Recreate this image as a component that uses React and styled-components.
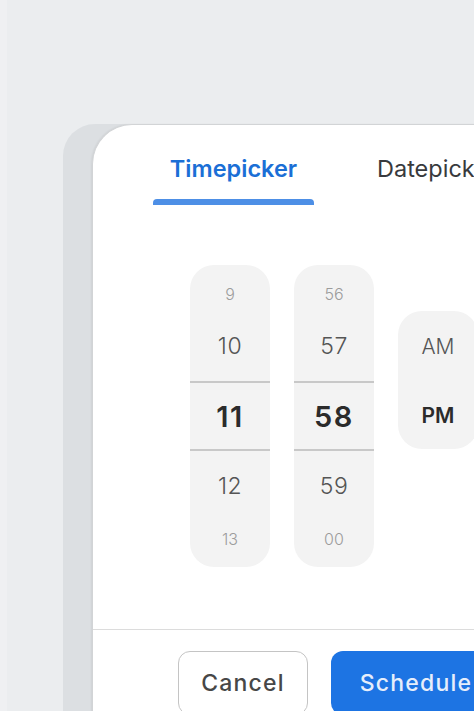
import React from "react";
import styled, { createGlobalStyle } from "styled-components";

const Global = createGlobalStyle`
  html, body { margin: 0; padding: 0; overflow: hidden; }
  body { font-family: Inter, "Noto Sans", "Liberation Sans", sans-serif; background: #ebedef; }
`;

const Page = styled.div`
  width: 474px;
  height: 711px;
  overflow: hidden;
  background: #ebedef;
  border-left: 7px solid #eff0f2;
  box-sizing: border-box;
  padding: 152px 0 0 56px;
`;

const BackCard = styled.div`
  width: 560px;
  height: 640px;
  background: #dcdfe2;
  border-top-left-radius: 32px;
  padding-left: 29px;
  box-sizing: border-box;
`;

const Card = styled.div`
  margin-top: -28px;
  width: 520px;
  height: 640px;
  background: #fff;
  border: 1px solid #d2d4d6;
  border-right: none;
  border-bottom: none;
  border-top-left-radius: 40px;
  box-shadow: -1px 0 2px rgba(0, 0, 0, 0.06);
  box-sizing: border-box;
  display: flex;
  flex-direction: column;
`;

const Tabs = styled.div`
  display: flex;
  padding: 26px 0 0 60px;
  gap: 0;
`;

const Tab = styled.div`
  display: flex;
  flex-direction: column;
  align-items: ${(p) => (p.$active ? "center" : "flex-start")};
  width: ${(p) => (p.$w ? p.$w + "px" : "auto")};
  margin-left: ${(p) => p.$ml || 0}px;
  font-size: 23.5px;
  font-weight: ${(p) => (p.$active ? 600 : 400)};
  color: ${(p) => (p.$active ? "#1b6fd6" : "#383a3d")};
  line-height: 36px;
  white-space: nowrap;
`;

const Underline = styled.div`
  margin-top: 12px;
  width: 100%;
  height: 6px;
  border-radius: 4px 4px 0 0;
  background: ${(p) => (p.$active ? "#4d8fe6" : "transparent")};
`;

const Wheels = styled.div`
  display: flex;
  align-items: flex-start;
  gap: 24px;
  padding: 60px 0 0 97px;
  height: 424px;
  box-sizing: border-box;
`;

const Wheel = styled.div`
  width: 80px;
  flex: none;
  background: #f3f3f3;
  border-radius: 24px;
  display: flex;
  flex-direction: column;
  margin-top: ${(p) => p.$offset || 0}px;
`;

const Outer = styled.div`
  height: 46px;
  box-sizing: border-box;
  padding-top: ${(p) => (p.$top ? 18 : 7)}px;
  text-align: center;
  font-size: 16px;
  font-weight: 300;
  line-height: 22px;
  color: #9c9c9c;
`;

const Row = styled.div`
  height: 70px;
  display: flex;
  align-items: center;
  justify-content: center;
  font-size: ${(p) => (p.$sel ? 29 : 23)}px;
  font-weight: ${(p) => (p.$sel ? 600 : 300)};
  letter-spacing: ${(p) => (p.$sel ? 1.5 : 0.5)}px;
  color: ${(p) => (p.$sel ? "#2b2b2b" : "#555")};
  border-top: ${(p) => (p.$lines ? "2px solid #c8c8c8" : "none")};
  border-bottom: ${(p) => (p.$lines ? "2px solid #c8c8c8" : "none")};
  box-sizing: border-box;
`;

const AmPmRow = styled.div`
  height: ${(p) => (p.$h ? p.$h : 70)}px;
  display: flex;
  align-items: center;
  justify-content: center;
  font-size: 21px;
  font-weight: ${(p) => (p.$sel ? 600 : 300)};
  color: ${(p) => (p.$sel ? "#2b2b2b" : "#555")};
`;

const Divider = styled.div`
  height: 1px;
  background: #dcdcdc;
`;

const Footer = styled.div`
  display: flex;
  gap: 23px;
  padding: 21px 0 0 85px;
`;

const Button = styled.button`
  height: 64px;
  width: ${(p) => p.$w}px;
  border-radius: 12px;
  font-family: inherit;
  font-size: 23px;
  font-weight: 500;
  letter-spacing: 1.2px;
  padding: 0;
  box-sizing: border-box;
  ${(p) =>
    p.$primary
      ? `background: #1d74e3; color: #e6eefb; border: none;`
      : `background: #fff; color: #474747; border: 1.5px solid #c4c4c4;`}
`;

export default function App() {
  return (
    <>
      <Global />
      <Page>
        <BackCard>
          <Card>
            <Tabs>
              <Tab $active $w={161}>
                Timepicker
                <Underline $active />
              </Tab>
              <Tab $w={150} $ml={63}>
                Datepicker
                <Underline />
              </Tab>
            </Tabs>
            <Wheels>
              <Wheel>
                <Outer $top>9</Outer>
                <Row>10</Row>
                <Row $sel $lines>11</Row>
                <Row>12</Row>
                <Outer>13</Outer>
              </Wheel>
              <Wheel>
                <Outer $top>56</Outer>
                <Row>57</Row>
                <Row $sel $lines>58</Row>
                <Row>59</Row>
                <Outer>00</Outer>
              </Wheel>
              <Wheel $offset={46}>
                <AmPmRow>AM</AmPmRow>
                <AmPmRow $sel $h={68}>PM</AmPmRow>
              </Wheel>
            </Wheels>
            <Divider />
            <Footer>
              <Button $w={130}>Cancel</Button>
              <Button $primary $w={170}>Schedule</Button>
            </Footer>
          </Card>
        </BackCard>
      </Page>
    </>
  );
}
